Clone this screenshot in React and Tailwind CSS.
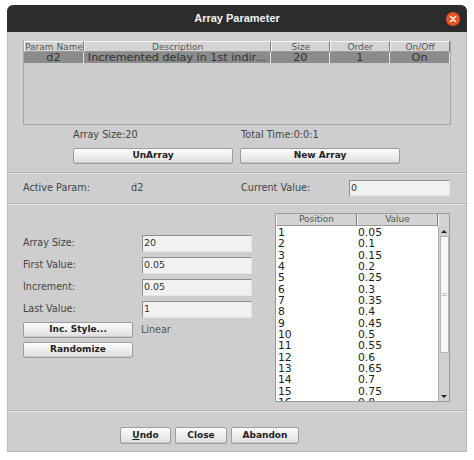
import React from "react";

const font = "font-['DejaVu_Sans',sans-serif]";

function Btn({ children, className = "" }) {
  return (
    <div
      className={`flex items-center justify-center rounded-[2px] border border-[#9c9c9c] bg-gradient-to-b from-[#fdfdfd] to-[#dedede] text-[9px] font-bold text-[#222] shadow-[inset_0_-1px_0_#c8c8c8] ${className}`}
    >
      {children}
    </div>
  );
}

function Field({ value, className = "" }) {
  return (
    <div
      className={`flex items-center border border-t-[#8e8e8e] border-l-[#8e8e8e] border-r-[#e4e4e4] border-b-[#e4e4e4] bg-[#f1f1f1] pl-[1px] text-[9.5px] text-[#333] ${className}`}
    >
      {value}
    </div>
  );
}

export default function App() {
  const rows = Array.from({ length: 20 }, (_, i) => [
    i + 1,
    String(Number(((i + 1) * 0.05).toFixed(2))),
  ]);
  return (
    <div className={`w-[474px] h-[460px] bg-white pt-[5px] pl-[7px] ${font}`}>
      <div className="w-[460px] h-[447px] flex flex-col rounded-t-[6px] overflow-hidden">
        {/* title bar */}
        <div className="relative h-[27px] shrink-0 bg-[#2c2c2c] flex items-center justify-center">
          <span className="font-['Liberation_Sans',sans-serif] text-[11px] font-bold text-[#f2f2f2]">
            Array Parameter
          </span>
          <div className="absolute right-[7px] top-[7px] w-[14px] h-[14px] rounded-full bg-[#e9541f] flex items-center justify-center">
            <svg width="8" height="8" viewBox="0 0 8 8">
              <path d="M1.5 1.5L6.5 6.5M6.5 1.5L1.5 6.5" stroke="white" strokeWidth="1.6" strokeLinecap="round" />
            </svg>
          </div>
        </div>
        {/* body */}
        <div className="flex-1 flex flex-col bg-[#cecece] border-x border-b border-[#b9b9b9]">
          {/* section 1 */}
          <div className="h-[140px] shrink-0 pt-[9px] pl-[15px]">
            <div className="w-[428px] h-[84px] border border-[#a5a5a5] border-t-0 bg-[#cdcdcd] flex flex-col">
              <div className="flex h-[11px] text-[9px] text-[#555] leading-[11px] bg-[#d4d4d4]">
                {[
                  ["Param Name", "w-[60px]"],
                  ["Description", "w-[188px]"],
                  ["Size", "w-[59px]"],
                  ["Order", "w-[60px]"],
                  ["On/Off", "w-[60px]"],
                ].map(([t, w]) => (
                  <div
                    key={t}
                    className={`${w} text-center border-t border-l border-l-[#f4f4f4] border-t-[#f4f4f4] border-r border-r-[#7c7c7c] border-b border-b-[#9a9a9a] overflow-hidden whitespace-nowrap`}
                  >
                    {t}
                  </div>
                ))}
              </div>
              <div className="flex h-[11px] text-[11.2px] leading-[11px] text-[#333]">
                {[
                  ["d2", "w-[60px] text-center"],
                  ["Incremented delay in 1st indir...", "w-[188px] pl-[4px]"],
                  ["20", "w-[59px] text-center"],
                  ["1", "w-[60px] text-center"],
                  ["On", "w-[60px] text-center"],
                ].map(([t, w]) => (
                  <div
                    key={t}
                    className={`${w} bg-[#8b8b8b] border-r border-r-[#e2e2e2] overflow-hidden whitespace-nowrap`}
                  >
                    {t}
                  </div>
                ))}
              </div>
            </div>
            <div className="flex h-[16px] mt-[2px] pl-[50px] items-center text-[9.7px] text-[#444]">
              <div className="w-[168px]">Array Size:20</div>
              <div>Total Time:0:0:1</div>
            </div>
            <div className="flex gap-[7px] mt-[5px] pl-[50px]">
              <Btn className="w-[160px] h-[16px]">UnArray</Btn>
              <Btn className="w-[160px] h-[16px]">New Array</Btn>
            </div>
          </div>
          {/* section 2 */}
          <div className="h-[31px] shrink-0 border-t border-[#b3b3b3] shadow-[inset_0_1px_0_#e3e3e3] flex items-center pl-[15px] text-[9.7px] text-[#444]">
            <div className="w-[108px]">Active Param:</div>
            <div className="w-[110px]">d2</div>
            <div className="w-[108px]">Current Value:</div>
            <Field value="0" className="w-[101px] h-[16px]" />
          </div>
          {/* section 3 */}
          <div className="h-[207px] shrink-0 border-t border-[#b3b3b3] shadow-[inset_0_1px_0_#e3e3e3] flex pl-[15px]">
            <div className="w-[229px] pt-[31px] flex flex-col text-[9.6px] text-[#444]">
              {[
                ["Array Size:", "20"],
                ["First Value:", "0.05"],
                ["Increment:", "0.05"],
                ["Last Value:", "1"],
              ].map(([l, v]) => (
                <div key={l} className="flex items-center h-[17px] mb-[5px]">
                  <div className="w-[119px]">{l}</div>
                  <Field value={v} className="w-[110px] h-[17px]" />
                </div>
              ))}
              <div className="flex items-center mt-[-1px]">
                <Btn className="w-[110px] h-[16px]">Inc. Style...</Btn>
                <div className="ml-[8px] text-[9.6px] text-[#555]">Linear</div>
              </div>
              <Btn className="w-[110px] h-[16px] mt-[4px]">Randomize</Btn>
            </div>
            <div className="ml-[23px] mt-[9px] w-[175px] h-[189px] border border-[#9b9b9b] bg-white flex flex-col overflow-hidden">
              <div className="flex h-[12px] shrink-0 bg-[#d4d4d4] text-[9px] leading-[11px] text-[#555]">
                <div className="w-[81px] text-center border-r border-r-[#7c7c7c] border-b border-b-[#9a9a9a] border-l border-l-[#f4f4f4]">
                  Position
                </div>
                <div className="w-[81px] text-center border-r border-r-[#7c7c7c] border-b border-b-[#9a9a9a] border-l border-l-[#f4f4f4]">
                  Value
                </div>
                <div className="flex-1 border-l border-l-[#f4f4f4]" />
              </div>
              <div className="flex flex-1 min-h-0">
                <div className="w-[162px] overflow-hidden text-[10.8px] leading-[11.35px] text-[#222] pt-[1px]">
                  {rows.map(([p, v]) => (
                    <div key={p} className="flex">
                      <div className="w-[82px] pl-[2px]">{p}</div>
                      <div>{v}</div>
                    </div>
                  ))}
                </div>
                <div className="flex-1 bg-[#d0d0d0] border-l border-[#b0b0b0] flex flex-col items-center">
                  <div className="h-[10px] w-full flex items-center justify-center">
                    <div className="w-0 h-0 border-x-[3px] border-x-transparent border-b-[3px] border-b-[#222]" />
                  </div>
                  <div className="w-[9px] h-[117px] bg-[#f7f7f7] border border-[#b5b5b5] flex items-center justify-center">
                    <div className="w-[5px] h-[3px] border-y border-[#c0c0c0]" />
                  </div>
                  <div className="flex-1" />
                  <div className="h-[10px] w-full flex items-center justify-center">
                    <div className="w-0 h-0 border-x-[3px] border-x-transparent border-t-[3px] border-t-[#222]" />
                  </div>
                </div>
              </div>
            </div>
          </div>
          {/* section 4 */}
          <div className="flex-1 border-t border-[#b3b3b3] shadow-[inset_0_1px_0_#e3e3e3] flex pl-[112px] pt-[16px] gap-[4px]">
            <Btn className="w-[51px] h-[17px]">
              <span className="underline">U</span>ndo
            </Btn>
            <Btn className="w-[52px] h-[17px]">Close</Btn>
            <Btn className="w-[68px] h-[17px]">Abandon</Btn>
          </div>
        </div>
      </div>
    </div>
  );
}
